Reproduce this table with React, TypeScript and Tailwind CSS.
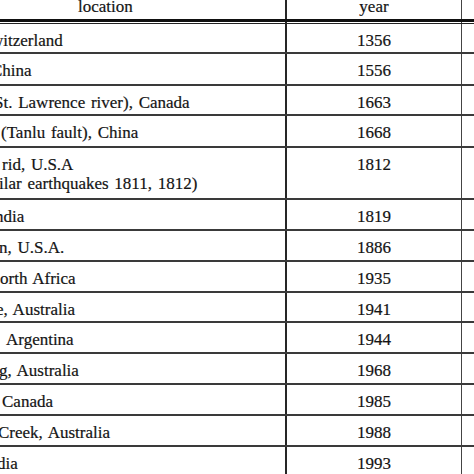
import React from "react";

type Row = {
  lines: { t: string; c: string }[];
  year: string;
  h: string;
};

const rows: Row[] = [
  { lines: [{ t: "witzerland", c: "ml-[-9px]" }], year: "1356", h: "h-[30px]" },
  { lines: [{ t: "China", c: "ml-[-9px]" }], year: "1556", h: "h-[32px]" },
  { lines: [{ t: "St. Lawrence river), Canada", c: "ml-[-6px]" }], year: "1663", h: "h-[30px]" },
  { lines: [{ t: "(Tanlu fault), China", c: "ml-[1px]" }], year: "1668", h: "h-[32px]" },
  {
    lines: [
      { t: "rid, U.S.A", c: "ml-[2px]" },
      { t: "ilar earthquakes 1811, 1812)", c: "ml-[-1px]" },
    ],
    year: "1812",
    h: "h-[52px]",
  },
  { lines: [{ t: "ndia", c: "ml-[-5px]" }], year: "1819", h: "h-[31px]" },
  { lines: [{ t: "n, U.S.A.", c: "ml-[-1px]" }], year: "1886", h: "h-[31px]" },
  { lines: [{ t: "orth Africa", c: "ml-[0px]" }], year: "1935", h: "h-[31px]" },
  { lines: [{ t: "e, Australia", c: "ml-[-4px]" }], year: "1941", h: "h-[30px]" },
  { lines: [{ t: "Argentina", c: "ml-[6px]" }], year: "1944", h: "h-[31px]" },
  { lines: [{ t: "g, Australia", c: "ml-[-1px]" }], year: "1968", h: "h-[31px]" },
  { lines: [{ t: "Canada", c: "ml-[2px]" }], year: "1985", h: "h-[31px]" },
  { lines: [{ t: "Creek, Australia", c: "ml-[-2px]" }], year: "1988", h: "h-[31px]" },
  { lines: [{ t: "dia", c: "ml-[-3px]" }], year: "1993", h: "h-[31px]" },
];

export default function App() {
  return (
    <div
      className="w-[474px] h-[474px] overflow-hidden bg-white text-[#141414] text-[17px] leading-[19px] [word-spacing:1.5px] [-webkit-text-stroke:0.2px_#141414]"
      style={{ fontFamily: '"Liberation Serif", "Times New Roman", serif' }}
    >
      {/* header */}
      <div className="flex h-[22px] border-b-[3px] border-[#111]">
        <div className="w-[287px] border-r-2 border-[#262626] flex items-end pb-[3px]">
          <span className="ml-[78px] whitespace-nowrap">location</span>
        </div>
        <div className="w-[175px] border-r border-[#444] flex items-end justify-center pb-[3px]">
          <span>year</span>
        </div>
        <div className="flex-1" />
      </div>
      <div className="flex h-[2px] border-b border-[#222]">
        <div className="w-[287px] border-r-2 border-[#262626]" />
        <div className="w-[175px] border-r border-[#444]" />
        <div className="flex-1" />
      </div>
      {rows.map((r, i) => (
        <div
          key={i}
          className={`flex ${r.h} ${i < rows.length - 1 ? "border-b-2 border-[#3a3a3a]" : ""}`}
        >
          <div className="w-[287px] border-r-2 border-[#262626] overflow-hidden pt-[7px] flex flex-col">
            {r.lines.map((l, j) => (
              <span key={j} className={`block whitespace-nowrap ${l.c}`}>
                {l.t}
              </span>
            ))}
          </div>
          <div className="w-[175px] border-r border-[#444] pt-[7px] text-center">
            {r.year}
          </div>
          <div className="flex-1" />
        </div>
      ))}
    </div>
  );
}
